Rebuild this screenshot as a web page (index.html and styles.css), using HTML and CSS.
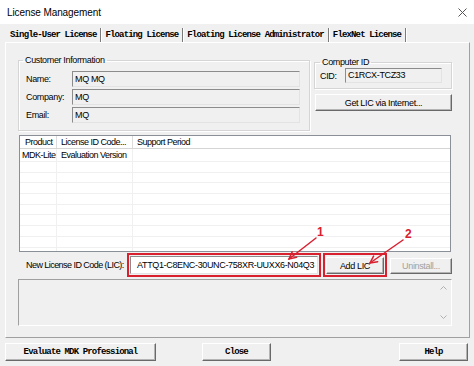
FILE: index.html
```html
<!DOCTYPE html>
<html lang="en">

<head>
    <meta charset="UTF-8">
    <meta name="viewport" content="width=device-width, initial-scale=1.0">
    <title>License Management</title>
    <link rel="stylesheet" href="styles.css">
</head>

<body>
    <div class="dialog">
        <!-- Title bar -->
        <div class="titlebar">
            <span class="title">License Management</span>
            <svg class="close-x" width="9" height="9" viewBox="0 0 9 9">
                <path d="M0.5 0.5 L8.5 8.5 M8.5 0.5 L0.5 8.5" stroke="#555" stroke-width="1" fill="none" />
            </svg>
        </div>

        <!-- Tabs -->
        <div class="tabs">
            <span class="tab">Single-User License</span>
            <span class="tab">Floating License</span>
            <span class="tab">Floating License Administrator</span>
            <span class="tab">FlexNet License</span>
        </div>

        <div class="panel">
            <div class="top-row">
                <fieldset class="group customer">
                    <legend>Customer Information</legend>
                    <div class="field"><label>Name:</label><div class="edit">MQ MQ</div></div>
                    <div class="field"><label>Company:</label><div class="edit">MQ</div></div>
                    <div class="field"><label>Email:</label><div class="edit">MQ</div></div>
                </fieldset>

                <div class="side">
                    <fieldset class="group computer">
                        <legend>Computer ID</legend>
                        <div class="field"><label>CID:</label><div class="edit">C1RCX-TCZ33</div></div>
                    </fieldset>
                    <button class="btn get-lic">Get LIC via Internet...</button>
                </div>
            </div>

            <!-- License list -->
            <div class="listview">
                <div class="lv-head">
                    <div class="cell c1">Product</div>
                    <div class="cell c2">License ID Code...</div>
                    <div class="cell c3">Support Period</div>
                </div>
                <div class="lv-row first">
                    <div class="cell c1">MDK-Lite</div>
                    <div class="cell c2">Evaluation Version</div>
                    <div class="cell c3"></div>
                </div>
                <div class="lv-row"><div class="cell c1"></div><div class="cell c2"></div><div class="cell c3"></div></div>
                <div class="lv-row"><div class="cell c1"></div><div class="cell c2"></div><div class="cell c3"></div></div>
                <div class="lv-row"><div class="cell c1"></div><div class="cell c2"></div><div class="cell c3"></div></div>
                <div class="lv-row"><div class="cell c1"></div><div class="cell c2"></div><div class="cell c3"></div></div>
                <div class="lv-row"><div class="cell c1"></div><div class="cell c2"></div><div class="cell c3"></div></div>
                <div class="lv-row"><div class="cell c1"></div><div class="cell c2"></div><div class="cell c3"></div></div>
                <div class="lv-row"><div class="cell c1"></div><div class="cell c2"></div><div class="cell c3"></div></div>
                <div class="lv-row"><div class="cell c1"></div><div class="cell c2"></div><div class="cell c3"></div></div>
                <div class="lv-row"><div class="cell c1"></div><div class="cell c2"></div><div class="cell c3"></div></div>
            </div>

            <!-- New LIC row -->
            <div class="lic-row">
                <label class="lic-label">New License ID Code (LIC):</label>
                <div class="mark-box lic-box">
                    <div class="lic-input">ATTQ1-C8ENC-30UNC-758XR-UUXX6-N04Q3</div>
                </div>
                <div class="mark-box add-box">
                    <button class="btn add-lic">Add LIC</button>
                </div>
                <button class="btn uninstall" disabled>Uninstall...</button>
            </div>

            <div class="memo">
                <div class="scroll">
                    <svg width="7" height="4" viewBox="0 0 7 4"><path d="M0.5 3.5 L3.5 0.5 L6.5 3.5" stroke="#b0b0b0" fill="none" /></svg>
                    <svg width="7" height="4" viewBox="0 0 7 4"><path d="M0.5 0.5 L3.5 3.5 L6.5 0.5" stroke="#b0b0b0" fill="none" /></svg>
                </div>
            </div>
        </div>

        <!-- Bottom buttons -->
        <div class="footer">
            <button class="btn f-btn evaluate">Evaluate MDK Professional</button>
            <button class="btn f-btn close">Close</button>
            <button class="btn f-btn help">Help</button>
        </div>

        <!-- Red annotation arrows -->
        <svg class="notes" width="474" height="366" viewBox="0 0 474 366">
            <g stroke="#d8202f" stroke-width="1.5" fill="none" stroke-linecap="round">
                <path d="M316 238 L289 259" />
                <path d="M296.6 257.3 L289 259 L292.2 251.9" />
                <path d="M403 240 L370 263" />
                <path d="M377.7 261.7 L370 263 L373.6 256.1" />
            </g>
            <text x="317" y="236" class="note-num">1</text>
            <text x="405" y="238" class="note-num">2</text>
        </svg>
    </div>
</body>

</html>
```

FILE: styles.css
```css
/* Reset and Global Styles */
* {
    margin: 0;
    padding: 0;
    box-sizing: border-box;
}

body {
    font-family: "Liberation Sans", Arial, sans-serif;
    font-size: 9px;
    letter-spacing: -0.35px;
    color: #000;
    background-color: #f0f0f0;
}

.dialog {
    position: relative;
    width: 474px;
    height: 366px;
    overflow: hidden;
}

/* Title bar */
.titlebar {
    height: 24px;
    background-color: #fff;
    display: flex;
    align-items: center;
    justify-content: space-between;
    padding: 0 7px;
}

.title {
    font-size: 10px;
    letter-spacing: -0.1px;
}

/* Tabs */
.tabs {
    display: flex;
    align-items: flex-end;
    height: 18px;
    padding-left: 6px;
    font-family: "Liberation Mono", "Courier New", monospace;
    font-weight: bold;
    font-size: 9px;
    letter-spacing: -0.85px;
}

.tab {
    height: 14px;
    line-height: 14px;
    padding: 0 4px;
    border-right: 1px solid #7a7a7a;
    box-shadow: 1px 0 0 #fff;
}

/* Tab page */
.panel {
    margin-left: 5px;
    width: 465px;
    height: 296px;
    border: 1px solid;
    border-color: #fff #a0a0a0 #a0a0a0 #fff;
    padding-left: 12px;
}

.top-row {
    display: flex;
    align-items: flex-start;
    padding-top: 12px;
}

fieldset.group {
    border: 1px solid #d5d5d5;
    box-shadow: inset 1px 1px 0 #fff, 1px 1px 0 #fff;
    min-width: 0;
}

legend {
    height: 10px;
    line-height: 10px;
    padding: 0 2px;
}

.customer {
    width: 292px;
    padding: 6px 9px 7px 7px;
}

.customer legend {
    margin-left: -3px;
}

.field {
    display: flex;
    align-items: center;
    height: 16px;
}

.field + .field {
    margin-top: 2px;
}

.field label {
    width: 46px;
    flex-shrink: 0;
}

.edit {
    flex: 1;
    height: 16px;
    line-height: 14px;
    padding-left: 2px;
    border: 1px solid;
    border-color: #8c8c8c #e3e3e3 #e3e3e3 #8c8c8c;
}

.side {
    width: 138px;
    margin-left: 4px;
    margin-top: 2px;
}

.computer {
    width: 100%;
    padding: 1px 9px 5px 5px;
}

.computer .field,
.computer .edit {
    height: 15px;
}

.computer .edit {
    line-height: 13px;
}

.computer .field label {
    width: 25px;
}

/* Buttons */
.btn {
    display: block;
    font: inherit;
    letter-spacing: inherit;
    color: #000;
    background-color: #f0f0f0;
    border: 1px solid;
    border-color: #fff #696969 #696969 #fff;
    box-shadow: inset -1px -1px 0 #b4b4b4;
}

.get-lic {
    width: 137px;
    height: 17px;
    margin: 5px 0 0 1px;
}

/* List view */
.listview {
    width: 432px;
    height: 117px;
    margin: 4px 0 0 1px;
    border: 1px solid #8a8f98;
    background-color: #fff;
    overflow: hidden;
    letter-spacing: -0.5px;
}

.lv-head,
.lv-row {
    display: flex;
}

.lv-head {
    height: 13px;
    line-height: 12px;
    border-bottom: 1px solid #d5d5d5;
}

.lv-head .cell {
    border-right: 1px solid #dcdcdc;
}

.lv-row {
    height: 10.7px;
    border-bottom: 1px solid #f0f0f0;
}

.lv-row.first {
    height: 13px;
    line-height: 12px;
}

.lv-row .c1,
.lv-row .c2 {
    border-right: 1px solid #f0f0f0;
}

.cell {
    padding-left: 4px;
    white-space: nowrap;
    overflow: hidden;
}

.c1 {
    width: 37px;
    padding-left: 2px;
}

.lv-head .c1 {
    padding-left: 5px;
}

.c2 {
    width: 76px;
}

.c3 {
    flex: 1;
    border-right: none !important;
}

/* New LIC row */
.lic-row {
    display: flex;
    align-items: center;
    height: 24px;
    margin-top: 1px;
    padding-left: 8px;
}

.lic-label {
    width: 101px;
    flex-shrink: 0;
    white-space: nowrap;
    letter-spacing: -0.55px;
}

.mark-box {
    border: 2px solid #d8202f;
    flex-shrink: 0;
}

.lic-box {
    width: 194px;
    padding: 1px;
}

.lic-input {
    height: 18px;
    line-height: 16px;
    padding-left: 6px;
    white-space: nowrap;
    background-color: #fff;
    border: 1px solid;
    border-color: #8c8c8c #e3e3e3 #e3e3e3 #8c8c8c;
}

.add-box {
    margin-left: 2px;
    width: 64px;
    padding: 2px 1px 1px;
}

.add-lic {
    width: 58px;
    height: 17px;
}

.uninstall {
    width: 62px;
    height: 16px;
    margin: 2px 0 0 3px;
    color: #a0a0a0;
}

/* Message box */
.memo {
    display: flex;
    justify-content: flex-end;
    width: 434px;
    height: 47px;
    margin-top: 2px;
    border: 1px solid;
    border-color: #a0a0a0 #fff #fff #a0a0a0;
}

.scroll {
    width: 15px;
    display: flex;
    flex-direction: column;
    justify-content: space-between;
    align-items: center;
    padding: 6px 0 6px;
}

/* Footer buttons */
.footer {
    display: flex;
    width: 463px;
    margin: 5px 0 0 5px;
}

.f-btn {
    height: 18px;
    font-family: "Liberation Mono", "Courier New", monospace;
    font-weight: bold;
    font-size: 9px;
    letter-spacing: -0.85px;
}

.evaluate {
    width: 151px;
}

.close {
    width: 69px;
    margin-left: 46px;
}

.help {
    width: 69px;
    margin-left: auto;
}

/* Annotations */
.notes {
    position: absolute;
    top: 0;
    left: 0;
    pointer-events: none;
}

.note-num {
    font-family: "Liberation Sans", Arial, sans-serif;
    font-weight: bold;
    font-size: 12px;
    fill: #d8202f;
}
```
